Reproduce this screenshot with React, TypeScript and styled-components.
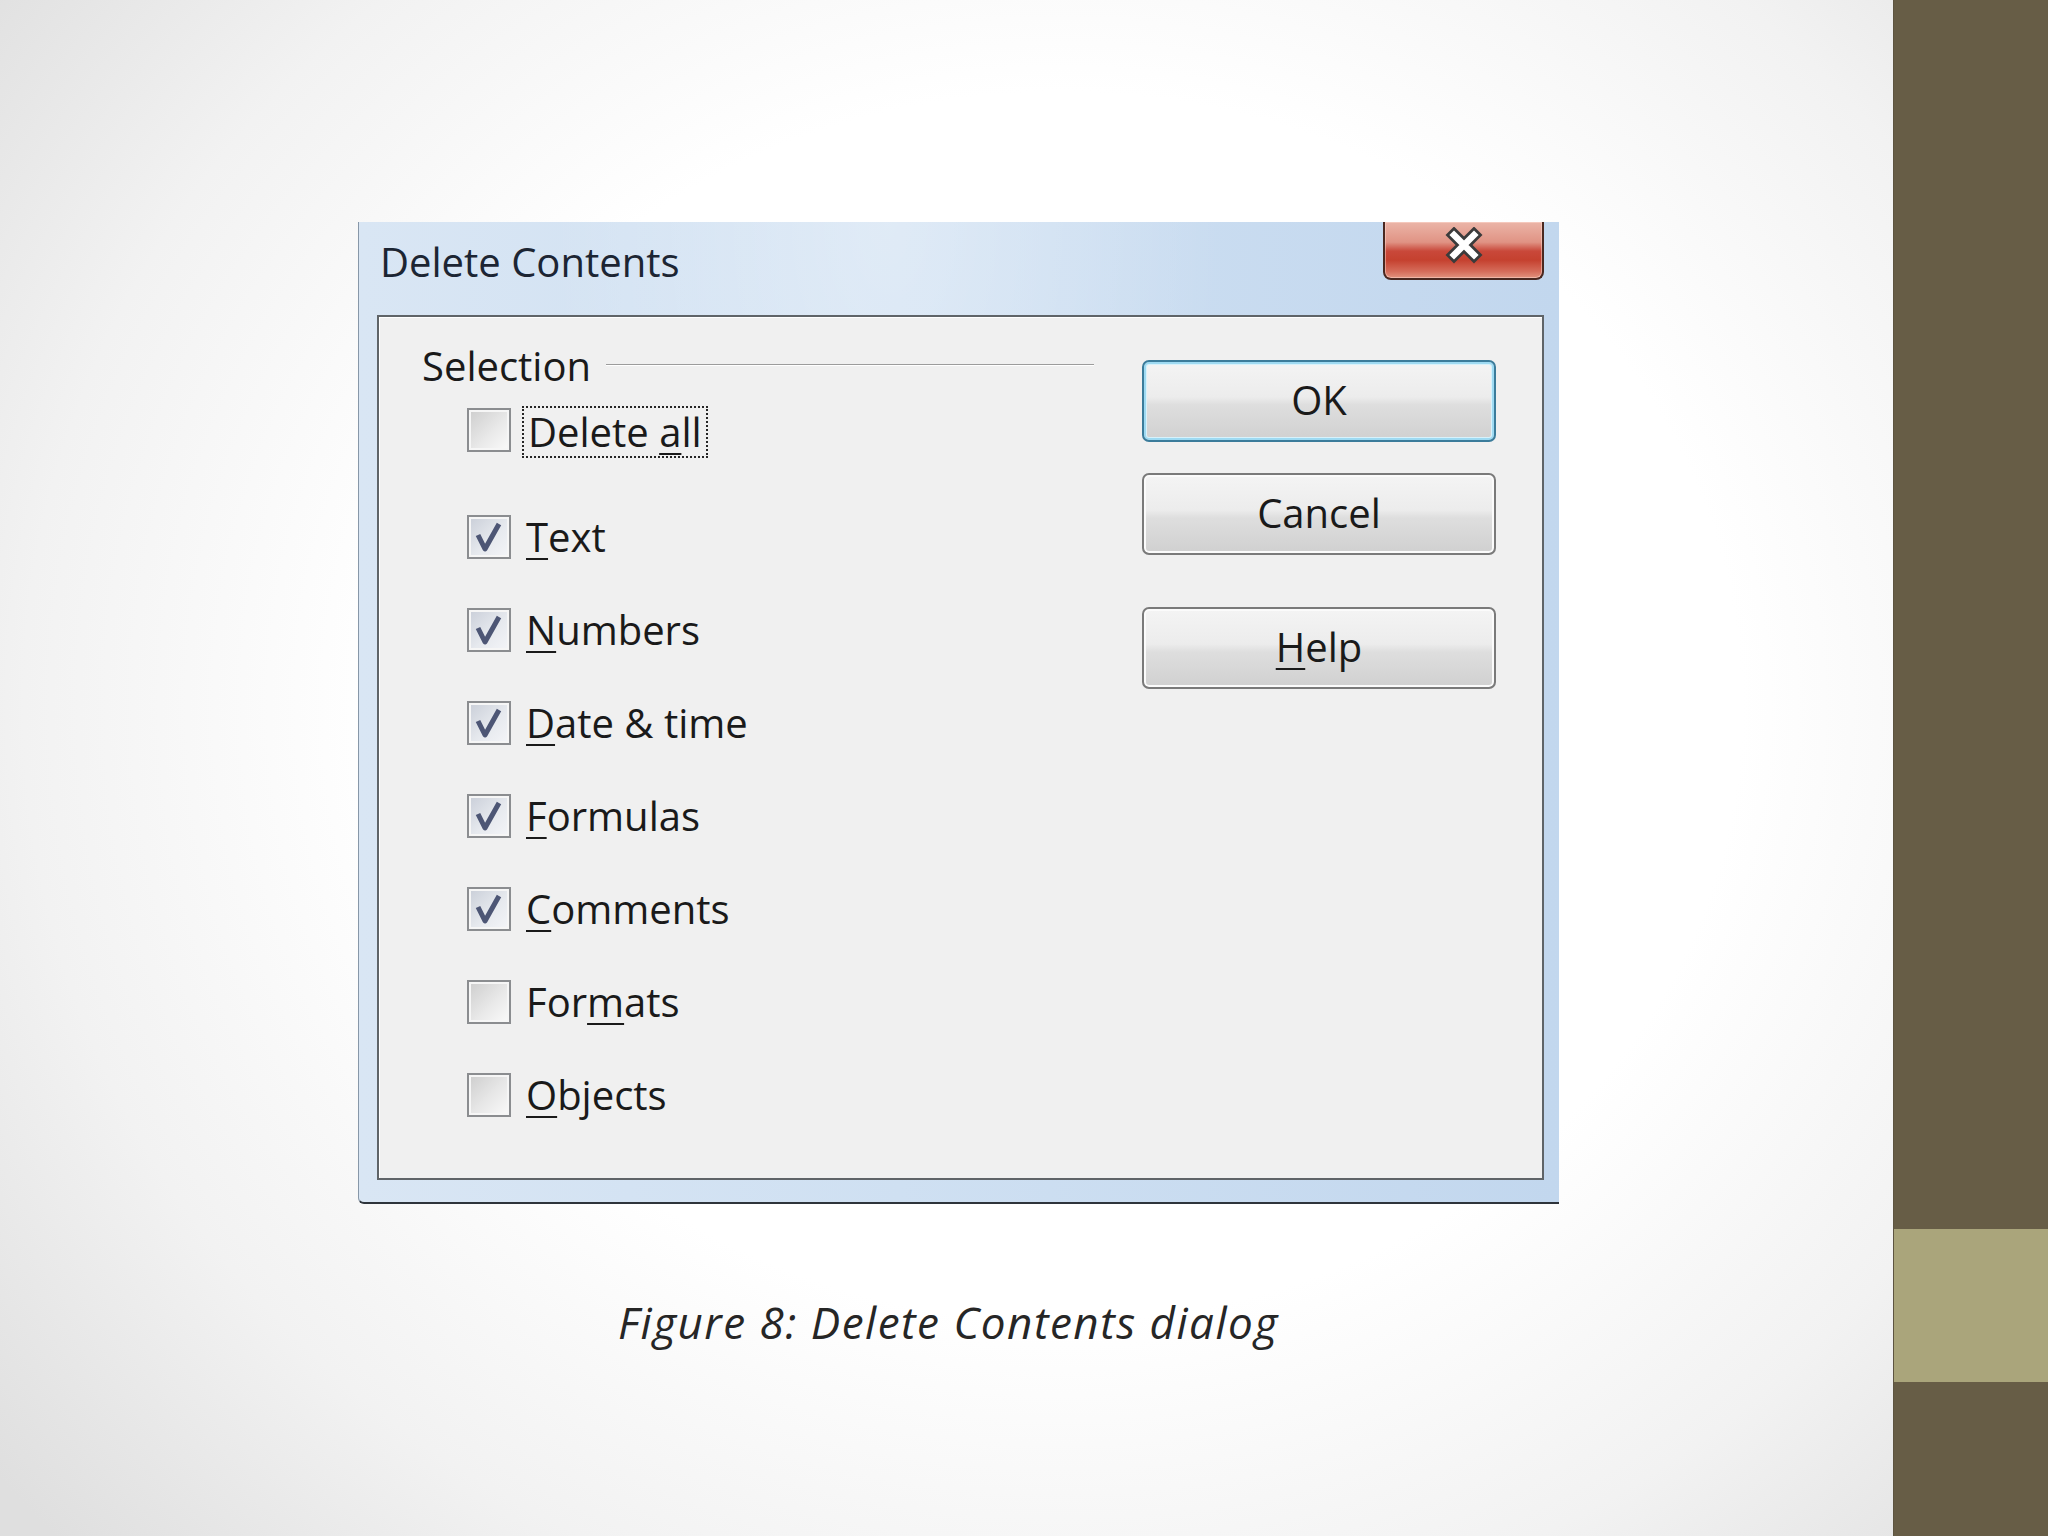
import React from 'react';
import styled, { createGlobalStyle } from 'styled-components';

const GlobalStyle = createGlobalStyle`
  html, body {
    margin: 0;
    padding: 0;
  }
  body {
    width: 2048px;
    height: 1536px;
    overflow: hidden;
    font-family: "Open Sans", "Noto Sans", sans-serif;
  }
`;

const Slide = styled.div`
  display: flex;
  width: 2048px;
  height: 1536px;
`;

const Stage = styled.main`
  flex: 1;
  display: flex;
  flex-direction: column;
  align-items: flex-start;
  padding-top: 222px;
  box-sizing: border-box;
  background: radial-gradient(ellipse 72% 80% at 56% 46%, #ffffff 50%, #f2f2f2 76%, #dfdfdf 100%);
`;

const SideBar = styled.aside`
  width: 154px;
  display: flex;
  flex-direction: column;
  border-left: 1px solid #5d5440;
`;

const Band = styled.div<{ $tone: 'dark' | 'light'; $h?: number }>`
  background: ${p => (p.$tone === 'dark' ? '#675d46' : '#aaa57b')};
  height: ${p => (p.$h ? `${p.$h}px` : 'auto')};
  flex: ${p => (p.$h ? '0 0 auto' : '1')};
`;

const Dialog = styled.section`
  margin-left: 358px;
  width: 1201px;
  height: 982px;
  box-sizing: border-box;
  display: flex;
  flex-direction: column;
  border-left: 1px solid #8797a8;
  border-bottom: 2px solid #2e343b;
  border-radius: 0 0 0 6px;
  background:
    radial-gradient(ellipse 28% 60% at 44% 0%, rgba(255, 255, 255, 0.35), rgba(255, 255, 255, 0) 100%),
    linear-gradient(to right, #d9e6f4 0%, #cfe0f2 45%, #c2d7ee 100%);
`;

const TitleBar = styled.header`
  height: 93px;
  display: flex;
  justify-content: space-between;
  align-items: flex-start;
  padding: 0 15px 0 21px;
  box-sizing: border-box;
`;

const Title = styled.h1`
  margin: 16px 0 0;
  font-size: 40px;
  line-height: 48px;
  font-weight: 400;
  color: #1c2533;
`;

const CloseButton = styled.button`
  width: 161px;
  height: 58px;
  padding: 0;
  display: flex;
  align-items: flex-start;
  justify-content: center;
  border: 2px solid #4a2820;
  border-top: none;
  border-radius: 0 0 8px 8px;
  background: linear-gradient(
    to bottom,
    #ebb5a8 0%,
    #e09384 36%,
    #c9483a 52%,
    #c5412f 68%,
    #d56c5a 88%,
    #e2937f 100%
  );
  box-shadow: inset 0 0 0 1px rgba(255, 220, 210, 0.5);
`;

const Panel = styled.div`
  margin: 0 15px 22px 18px;
  flex: 1;
  box-sizing: border-box;
  border: 2px solid #5f6468;
  background: #f0f0f0;
  box-shadow: inset 1px 1px 0 #ffffff;
  padding: 28px 46px 0 43px;
  display: grid;
  grid-template-columns: 1fr 354px;
  column-gap: 48px;
  align-items: start;
`;

const Group = styled.div`
  display: flex;
  flex-direction: column;
`;

const GroupHeader = styled.div`
  display: flex;
  align-items: center;
  gap: 15px;
  height: 40px;
  font-size: 40px;
  color: #1a1a1a;
`;

const Rule = styled.div`
  flex: 1;
  border-top: 1px solid #9c9c9c;
  border-bottom: 1px solid #ffffff;
`;

const Options = styled.div`
  display: flex;
  flex-direction: column;
  gap: 49px;
  margin-top: 23px;
  padding-left: 45px;
`;

const Row = styled.label<{ $extra?: number }>`
  display: flex;
  align-items: center;
  height: 44px;
  gap: 15px;
  margin-bottom: ${p => p.$extra ?? 0}px;
  font-size: 40px;
  line-height: 44px;
  color: #1a1a1a;
`;

const Box = styled.span<{ $checked: boolean }>`
  width: 44px;
  height: 44px;
  box-sizing: border-box;
  flex: 0 0 auto;
  border: 2px solid #8b8d90;
  box-shadow: inset 0 0 0 2px #f6f6f6;
  background: ${p =>
    p.$checked
      ? 'linear-gradient(135deg, #c9ced8 0%, #e6e9ee 55%, #f4f5f8 100%)'
      : 'linear-gradient(135deg, #cdcdcd 0%, #e8e8e8 55%, #fafafa 100%)'};
  display: flex;
  align-items: center;
  justify-content: center;
`;

const Focus = styled.span`
  border: 2px dotted #262626;
  padding: 2px 4px;
  margin-left: -4px;
  margin-top: 4px;
  line-height: 44px;
`;

const Key = styled.span`
  text-decoration: underline;
  text-decoration-thickness: 2px;
  text-underline-offset: 6px;
`;

const Buttons = styled.div`
  display: flex;
  flex-direction: column;
  margin-top: 15px;
`;

const PushButton = styled.button<{ $default?: boolean; $gap?: number }>`
  width: 354px;
  height: 82px;
  margin-top: ${p => p.$gap ?? 0}px;
  border-radius: 7px;
  box-sizing: border-box;
  font-family: "Open Sans", "Noto Sans", sans-serif;
  font-size: 40px;
  color: #1a1a1a;
  padding: 0 0 4px;
  border: 2px solid ${p => (p.$default ? '#3b7c9b' : '#7a7a7a')};
  background: linear-gradient(to bottom, #f4f4f4 0%, #ececec 45%, #dedede 55%, #d0d0d0 100%);
  box-shadow: ${p =>
    p.$default
      ? 'inset 0 0 0 2px #9edaf2, inset 0 0 0 3px #d8f2fb'
      : 'inset 0 0 0 2px #fbfbfb'};
`;

const Caption = styled.p`
  margin: 92px 0 0 618px;
  font-family: "Open Sans", "Noto Sans", sans-serif;
  font-style: italic;
  font-size: 44px;
  letter-spacing: 1.5px;
  line-height: 52px;
  color: #262626;
`;

const CheckMark = () => (
  <svg width="36" height="36" viewBox="0 0 36 36">
    <path d="M7 16 L14 30 L28 5" fill="none" stroke="#4d5675" strokeWidth="5" strokeLinejoin="round" />
  </svg>
);

const CloseGlyph = () => (
  <svg width="44" height="38" viewBox="0 0 44 38" style={{ marginTop: 5 }}>
    <path d="M12 8 L32 28 M32 8 L12 28" stroke="#3b3b3b" strokeWidth="12" strokeLinecap="square" />
    <path d="M12 8 L32 28 M32 8 L12 28" stroke="#ffffff" strokeWidth="6.5" strokeLinecap="square" />
  </svg>
);

type Option = { pre: string; key: string; post: string; checked: boolean };

const options: Option[] = [
  { pre: '', key: 'T', post: 'ext', checked: true },
  { pre: '', key: 'N', post: 'umbers', checked: true },
  { pre: '', key: 'D', post: 'ate & time', checked: true },
  { pre: '', key: 'F', post: 'ormulas', checked: true },
  { pre: '', key: 'C', post: 'omments', checked: true },
  { pre: 'For', key: 'm', post: 'ats', checked: false },
  { pre: '', key: 'O', post: 'bjects', checked: false },
];

export default function App() {
  return (
    <>
      <GlobalStyle />
      <Slide>
        <Stage>
          <Dialog>
            <TitleBar>
              <Title>Delete Contents</Title>
              <CloseButton aria-label="Close">
                <CloseGlyph />
              </CloseButton>
            </TitleBar>
            <Panel>
              <Group>
                <GroupHeader>
                  Selection
                  <Rule />
                </GroupHeader>
                <Options>
                  <Row $extra={14}>
                    <Box $checked={false} />
                    <Focus>
                      Delete <Key>a</Key>ll
                    </Focus>
                  </Row>
                  {options.map(o => (
                    <Row key={o.pre + o.key + o.post}>
                      <Box $checked={o.checked}>{o.checked && <CheckMark />}</Box>
                      <span>
                        {o.pre}
                        <Key>{o.key}</Key>
                        {o.post}
                      </span>
                    </Row>
                  ))}
                </Options>
              </Group>
              <Buttons>
                <PushButton $default>OK</PushButton>
                <PushButton $gap={31}>Cancel</PushButton>
                <PushButton $gap={52}>
                  <Key>H</Key>elp
                </PushButton>
              </Buttons>
            </Panel>
          </Dialog>
          <Caption>Figure 8: Delete Contents dialog</Caption>
        </Stage>
        <SideBar>
          <Band $tone="dark" $h={1229} />
          <Band $tone="light" $h={153} />
          <Band $tone="dark" />
        </SideBar>
      </Slide>
    </>
  );
}
